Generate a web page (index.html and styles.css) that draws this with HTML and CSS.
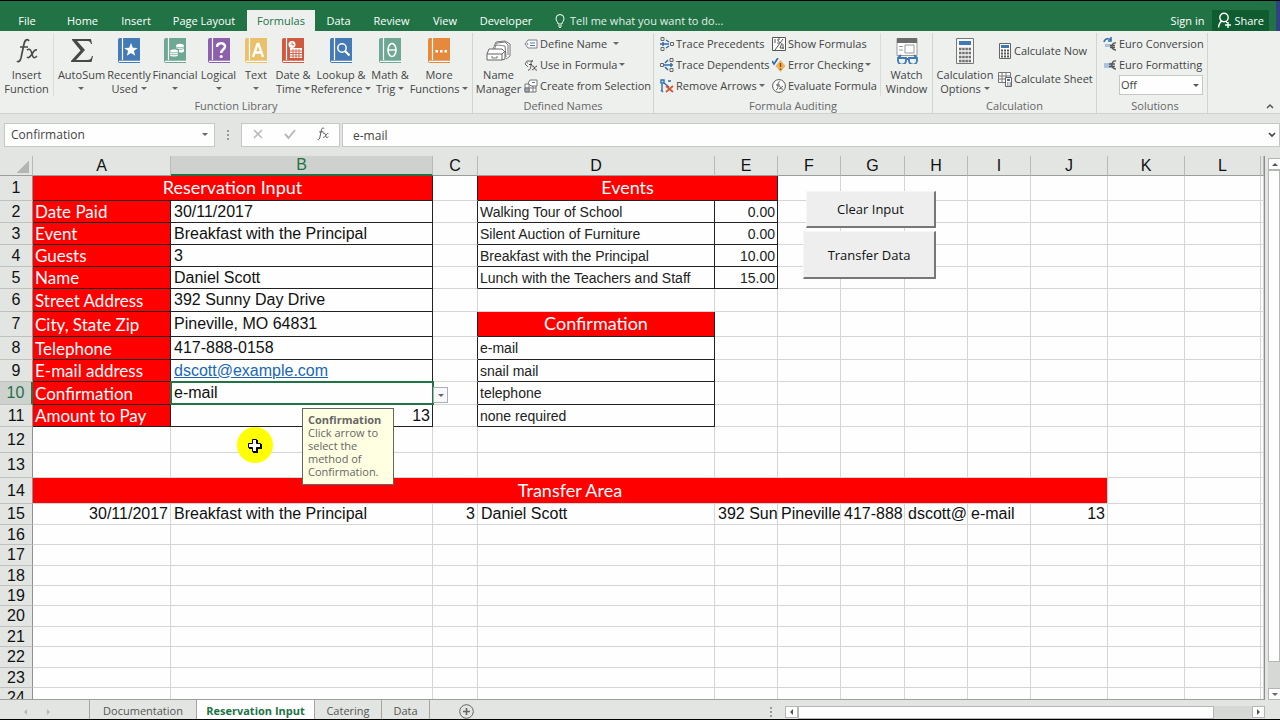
FILE: index.html
```html
<!DOCTYPE html>
<html lang="en">
<head>
<meta charset="utf-8">
<title>Reservation Input</title>
<link rel="stylesheet" href="styles.css">
</head>
<body>
<svg class="defs" aria-hidden="true">
  <symbol id="book" viewBox="0 0 22 26">
    <path d="M2 0h20v25H2a2 2 0 0 1-2-2V2a2 2 0 0 1 2-2z" fill="currentColor"/>
    <path d="M4.5 0v22M1 23.3h21" stroke="#fff" stroke-width="1.2" fill="none"/>
  </symbol>
  <symbol id="fx" viewBox="0 0 22 26">
    <path d="M13 3c-1-2-4-2-5 3L5 20c-1 4-3 4-4 3M4 9h8" stroke="#4a4a4a" stroke-width="1.7" fill="none"/>
    <path d="M11 12c3-2 4 0 5 4s2 5 5 2M21 12c-3-1-4 3-5 4s-3 5-5 3" stroke="#4a4a4a" stroke-width="1.6" fill="none"/>
  </symbol>
</svg>
<div class="app">
  <header class="titlebar">
    <nav class="tabs" aria-label="Ribbon tabs">
      <button>File</button><button>Home</button><button>Insert</button><button>Page Layout</button><button class="on">Formulas</button><button>Data</button><button>Review</button><button>View</button><button>Developer</button>
      <button class="tell"><svg width="10" height="14" viewBox="0 0 10 14" fill="none" stroke="#fff"><path d="M3 10c0-2-2-3-2-5.500a4 4 0 0 1 8 0C9 7 7 8 7 10zM3 12h4M4 13.500h2"/></svg>Tell me what you want to do...</button>
    </nav>
    <div class="account">
      <button>Sign in</button>
      <button class="share"><svg width="15" height="17" viewBox="0 0 15 17" fill="none" stroke="#fff" stroke-width="1.400"><circle cx="7" cy="5.500" r="4.200"/><path d="M5 9c-2 1-3 3-3.500 6.500M9 9l1 2M11 10v6M8 13h6"/></svg>Share</button>
    </div>
  </header>

  <section class="ribbon">
    <div class="group library">
      <div class="bigs">
        <button class="big rule"><svg><use href="#fx"/></svg><span>Insert<br>Function</span></button>
        <button class="big"><svg viewBox="0 0 22 26"><path d="M1 1h19l1 5h-1c-1-3-2-3-4-3H6l8 9-9 10h11c3 0 4-1 5-4h1l-1.500 6H0v-1l9.500-10.500L1 2z" fill="#484848"/></svg><span>AutoSum<br><i class="dd"></i></span></button>
        <button class="big blue"><svg viewBox="0 0 22 26"><use href="#book"/><path d="M13 5l1.800 4.700 4.900.2-3.800 3.100 1.300 4.800-4.200-2.700-4.200 2.700 1.300-4.800-3.800-3.100 4.900-.2z" fill="#fff"/></svg><span>Recently<br>Used <i class="dd"></i></span></button>
        <button class="big green"><svg viewBox="0 0 22 26"><use href="#book"/><g fill="#fff"><path d="M12 8c0-3 8-3 8 0v5c0 2-4 2-5 1V11l-3-1zM6 13c0-2 8-2 8 0v4c0 2-8 2-8 0z"/></g><path d="M12 9c2 1 6 1 8 0M14 11.500c2 0 4 0 6-1M6 14c2 1 6 1 8 0M6 16c2 1 6 1 8 0" stroke="#6fa795" fill="none" stroke-width=".8"/></svg><span>Financial<br><i class="dd"></i></span></button>
        <button class="big purple"><svg viewBox="0 0 22 26"><use href="#book"/><path d="M9 9c0-5 8-5 8-.500 0 3-3.800 3-3.800 6.500" stroke="#fff" stroke-width="2.500" fill="none"/><circle cx="13.200" cy="18.500" r="1.600" fill="#fff"/></svg><span>Logical<br><i class="dd"></i></span></button>
        <button class="big yellow"><svg viewBox="0 0 22 26"><use href="#book"/><path d="M8 19l4.500-13h1L18 19M9.500 14.500h7" stroke="#fff" stroke-width="2.300" fill="none"/></svg><span>Text<br><i class="dd"></i></span></button>
        <button class="big red"><svg viewBox="0 0 22 26"><use href="#book"/><path d="M8 10h12v10H8z" fill="#fff"/><path d="M8 13h12M8 15.500h12M8 18h12M11 11v9M14 11v9M17 11v9" stroke="#d05a40" stroke-width=".9"/><circle cx="10" cy="6.500" r="3.500" fill="#fff"/><path d="M10 4.500v2.300h2" stroke="#d05a40" fill="none"/></svg><span>Date &amp;<br>Time <i class="dd"></i></span></button>
        <button class="big blue"><svg viewBox="0 0 22 26"><use href="#book"/><circle cx="12" cy="10" r="4.200" stroke="#fff" stroke-width="1.500" fill="none"/><path d="M15 13l4.500 4.500" stroke="#fff" stroke-width="2.200"/></svg><span>Lookup &amp;<br>Reference <i class="dd"></i></span></button>
        <button class="big green"><svg viewBox="0 0 22 26"><use href="#book"/><ellipse cx="13" cy="12" rx="4" ry="6.500" stroke="#fff" stroke-width="1.600" fill="none"/><path d="M9 12h8" stroke="#fff" stroke-width="1.400"/></svg><span>Math &amp;<br>Trig <i class="dd"></i></span></button>
        <button class="big orange"><svg viewBox="0 0 22 26"><use href="#book"/><path d="M7.500 12h2.500v2.500H7.500zM12 12h2.500v2.500H12zM16.500 12H19v2.500h-2.500z" fill="#fff"/></svg><span>More<br>Functions <i class="dd"></i></span></button>
      </div>
      <h2>Function Library</h2>
    </div>

    <div class="group names">
      <div class="body">
        <button class="big"><svg class="wide" viewBox="0 0 26 26" fill="#fff" stroke="#777"><path d="M7 11l3-7 9-1 5 3v12l-4 3M9 8l2-3 8-1 3 3v10M9 11c0-5 3-4 10-3l1 11"/><path d="M3 11h13l3 3v7l-3 1H1v-6zM1 16h15l3-3M16 16v6" stroke="#666"/><path d="M6 18v2h5v-2" fill="none"/></svg><span>Name<br>Manager</span></button>
        <div class="list">
          <button><svg viewBox="0 0 14 14" fill="none" stroke="#7a7f87"><path d="M4 3h9v8H4L1 7z" fill="#fff"/><path d="M6 6h5M6 8.500h5" stroke="#4d7fb5"/><circle cx="3.500" cy="7" r=".6"/></svg>Define Name <i class="dd far"></i></button>
          <button><svg viewBox="0 0 14 14" fill="none" stroke="#666"><path d="M9 3H3L1 6l3 3M3 5h1"/><path d="M9 3c-2-1-2 2-2 4s-1 6-3 5M5 6.500h3M8 8c3-1 2 5 5 4M13 8c-2 0-3 4-5 4" stroke="#444"/></svg>Use in Formula <i class="dd"></i></button>
          <button><svg viewBox="0 0 14 14" fill="#fff" stroke="#777"><path d="M1 5h11v8H1zM1 9h11M5 5v8M9 5v8"/><path d="M1 9h4v4H1z" fill="#9ab"/><path d="M6 1h7v6H7L4 4z"/><path d="M8 3.500h3" stroke="#4d7fb5"/></svg>Create from Selection</button>
        </div>
      </div>
      <h2>Defined Names</h2>
    </div>

    <div class="group audit">
      <div class="body">
        <div class="list">
          <button><svg viewBox="0 0 14 14" fill="none" stroke="#666"><path d="M1 .5h3v3H1zM1 10.500h3v3H1zM10.500 5.500h3v3h-3z"/><path d="M0 7h6M3 5v4M6 3l3 2M6 11l3-2M6 7h3" stroke="#2f6ca8" stroke-width="1.500"/></svg>Trace Precedents</button>
          <button><svg viewBox="0 0 14 14" fill="none" stroke="#666"><path d="M.5 5.500h3v3h-3zM10 .5h3v3h-3zM10 10.500h3v3h-3z"/><path d="M4 7h9M11 5v4M5 5l3-3M5 9l3 3" stroke="#2f6ca8" stroke-width="1.500"/></svg>Trace Dependents</button>
          <button><svg viewBox="0 0 14 14" fill="none" stroke="#2f6ca8" stroke-width="1.400"><path d="M1 1h3v3H1zM8 2h3M2 5v7M4 4l5 4M1 11l2 2"/><path d="M6 7l7 6M13 7l-7 6" stroke="#d4553a" stroke-width="1.700"/></svg>Remove Arrows <i class="dd"></i></button>
        </div>
        <div class="list">
          <button><svg viewBox="0 0 14 14" fill="none" stroke="#555"><path d="M.5.500h13v13H.5z" fill="#fff"/><path d="M3 2v4M5 6c3 1 3-2 1-2V2h2M11 2l-8 11M10 6l-2 5h4M11 7v5"/></svg>Show Formulas</button>
          <button><svg viewBox="0 0 14 14" fill="none"><path d="M8.500 2l5 6-5 6-5-6z" fill="#edb45d"/><path d="M8.500 5v4M8.500 10.500v1.500" stroke="#8a4a12" stroke-width="1.500"/><path d="M0 3l2 3 4-6" stroke="#2f6ca8" stroke-width="1.700"/></svg>Error Checking <i class="dd"></i></button>
          <button><svg viewBox="0 0 14 14" fill="none" stroke="#555"><circle cx="7" cy="7" r="6.400" fill="#fff"/><path d="M8 3c-2-1-2 2-2 4s-1 4-2 4M4 6h4M7 7c2 0 1 4 4 3M11 7c-1 0-2 3-4 3"/></svg>Evaluate Formula</button>
        </div>
        <button class="big watch"><svg class="wide" viewBox="0 0 26 26" fill="none"><path d="M3 .5h20v17H3z" fill="#fff" stroke="#999"/><path d="M3 0h20v5H3z" fill="#6b6b6b"/><path d="M11 7h9v8h-9zM5 8.500h4M5 12h4" stroke="#999"/><path d="M4 20h8v2a4 4 0 0 1-8 1zM15 20h8v3a4 4 0 0 1-8-1zM12 21h3M4 20l3-3M23 20l-3-3" stroke="#3f79b5" stroke-width="1.800"/></svg><span>Watch<br>Window</span></button>
      </div>
      <h2>Formula Auditing</h2>
    </div>

    <div class="group calc">
      <div class="body">
        <button class="big"><svg viewBox="0 0 22 26"><path d="M2.500.500h17v25h-17z" fill="#f7f7f7" stroke="#777"/><path d="M5 3h12v4H5z" fill="#3f79b5"/><path d="M5 11h12M5 15h12M5 19h12M5 23h12" stroke="#707070" stroke-width="2.500" stroke-dasharray="2.500 .7"/></svg><span>Calculation<br>Options <i class="dd"></i></span></button>
        <div class="list two">
          <button><svg viewBox="0 0 14 16"><path d="M1.500.500h11v15h-11z" fill="#fff" stroke="#666"/><path d="M3 2h8v3H3z" fill="#3f79b5"/><path d="M3 7.500h8M3 10.500h8M3 13.500h8" stroke="#555" stroke-width="1.800" stroke-dasharray="2 1"/></svg>Calculate Now</button>
          <button><svg viewBox="0 0 14 16"><path d="M.5 1.500h12v10H.5zM.5 5h12M.5 8h12M4 1.500v10M8 1.500v10" fill="#fff" stroke="#777"/><path d="M7.500 6.500h6v9h-6z" fill="#fff" stroke="#666"/><path d="M9 9h3" stroke="#3f79b5" stroke-width="2"/><path d="M9 12h4M9 14h4" stroke="#555" stroke-dasharray="1 .5"/></svg>Calculate Sheet</button>
        </div>
      </div>
      <h2>Calculation</h2>
    </div>

    <div class="group euro">
      <div class="list">
        <button><svg viewBox="0 0 14 14" fill="none"><path d="M1 5c1-4 5-4 7-2M8 0v4H5" stroke="#2f6ca8" stroke-width="1.500"/><path d="M2 7h6v3H2z" fill="#a9c4de"/><path d="M13 6c-5-1-6 7 0 7M7 8.500h5M7 10.500h5" stroke="#555" stroke-width="1.400"/></svg>Euro Conversion</button>
        <button><svg viewBox="0 0 14 14" fill="none"><path d="M1 5h8v5H1z" fill="#a9c4de"/><path d="M13 3c-5-1-6 8 0 8M6 6h6M6 8.500h6" stroke="#555" stroke-width="1.400"/></svg>Euro Formatting</button>
        <select aria-label="Euro formatting"><option>Off</option></select>
      </div>
      <h2>Solutions</h2>
    </div>
    <button class="collapse" aria-label="Collapse ribbon"><svg width="8" height="6" viewBox="0 0 8 6"><path d="M1 5l3-3 3 3" stroke="#555" stroke-width="1.500" fill="none"/></svg></button>
  </section>

  <section class="formulabar">
    <div class="namebox"><input aria-label="Name box" value="Confirmation"><button aria-label="Names"><i class="dd"></i></button></div>
    <span class="grip"></span>
    <div class="tools">
      <button aria-label="Cancel"><svg width="12" height="12" viewBox="0 0 12 12"><path d="M2 2l8 8M10 2l-8 8" stroke="#b8b8b8" stroke-width="1.600"/></svg></button>
      <button aria-label="Enter"><svg width="12" height="12" viewBox="0 0 12 12"><path d="M1 6l3.500 4L11 2" stroke="#b8b8b8" stroke-width="1.900" fill="none"/></svg></button>
      <button aria-label="Insert function"><svg width="12" height="14"><use href="#fx"/></svg></button>
    </div>
    <input class="formula" aria-label="Formula" value="e-mail">
    <button class="expand" aria-label="Expand formula bar"><svg width="8" height="6" viewBox="0 0 8 6"><path d="M1 1l3 3 3-3" stroke="#444" stroke-width="1.600" fill="none"/></svg></button>
  </section>

  <main class="work">
    <div class="sheet">
      <table>
        <colgroup><col class="w-head"><col class="w-a"><col class="w-b"><col class="w-c"><col class="w-d"><col class="w-s"><col class="w-s"><col class="w-g"><col class="w-s"><col class="w-s"><col class="w-m"><col class="w-m"><col class="w-l"><col></colgroup>
        <thead><tr><th class="corner"></th><th>A</th><th class="cur">B</th><th>C</th><th>D</th><th>E</th><th>F</th><th>G</th><th>H</th><th>I</th><th>J</th><th>K</th><th>L</th><th></th></tr></thead>
        <tbody id="grid"></tbody>
      </table>
      <button class="macro clear">Clear Input</button>
      <button class="macro transfer">Transfer Data</button>
      <svg class="pointer" viewBox="0 0 36 36"><circle cx="18" cy="18" r="18" fill="#ff0"/><path d="M16 13h5v4h4v5h-4v4h-5v-4h-4v-5h4z" fill="#000"/><path d="M15.500 12.500h4v4h4v4h-4v4h-4v-4h-4v-4h4z" fill="#fff" stroke="#000"/></svg>
    </div>
    <div class="vscroll"><span class="sbtn"><i class="up"></i></span><span class="thumb"></span><span class="track"></span><span class="sbtn"><i class="dd"></i></span></div>
  </main>

  <footer class="bottom">
    <div class="arrows"><i class="left"></i><i class="right"></i></div>
    <button class="stab first">Documentation</button><button class="stab on">Reservation Input</button><button class="stab cat">Catering</button><button class="stab data">Data</button>
    <button class="add" aria-label="New sheet"><svg width="15" height="15" viewBox="0 0 15 15" fill="none" stroke="#666"><circle cx="7.500" cy="7.500" r="6.800"/><path d="M7.500 4v7M4 7.500h7" stroke-width="1.600"/></svg></button>
    <span class="grip"></span>
    <div class="hscroll"><span class="sbtn"><i class="left"></i></span><span class="thumb"></span><span class="track"></span><span class="sbtn"><i class="right"></i></span></div>
  </footer>
</div>
<script src="sheet.js"></script>
</body>
</html>
```
FILE: sheet.js
```
const heights = [25,22,22,22,22,23,25,23,22,23,22,26,25,26,21,20,21,20,20,21,20,21,20,20];
const tip = '<span class="selection"></span><button class="drop" aria-label="Choose confirmation"><i class="dd"></i></button>' +
  '<div class="tip" role="tooltip"><b>Confirmation</b><br>Click arrow to<br>select the<br>method of<br>Confirmation.</div>';
const form = [
  ['Date Paid', '30/11/2017'], ['Event', 'Breakfast with the Principal'], ['Guests', '3'],
  ['Name', 'Daniel Scott'], ['Street Address', '392 Sunny Day Drive'], ['City, State Zip', 'Pineville, MO 64831'],
  ['Telephone', '417-888-0158'], ['E-mail address', '<a href="mailto:dscott@example.com">dscott@example.com</a>'],
  ['Confirmation', 'e-mail' + tip], ['Amount to Pay', '13']
];
const events = [['Walking Tour of School', '0.00'], ['Silent Auction of Furniture', '0.00'],
  ['Breakfast with the Principal', '10.00'], ['Lunch with the Teachers and Staff', '15.00']];
const methods = ['e-mail', 'snail mail', 'telephone', 'none required'];
const record = ['30/11/2017', 'Breakfast with the Principal', '3', 'Daniel Scott', '392 Sun', 'Pineville', '417-888', 'dscott@', 'e-mail', '13'];

const cell = (text = '', cls = '', span = 1) => `<td class="${cls}" colspan="${span}">${text}</td>`;
const blanks = (n) => cell().repeat(n);

function cells(r) {
  if (r === 1) return cell('Reservation Input', 'title box', 2) + cell('', 'edge') + cell('Events', 'title box', 2) + blanks(8);
  if (r === 14) return cell('Transfer Area', 'title', 10) + blanks(3);
  if (r === 15) return record.map((t, i) => cell(t, [0, 2, 9].includes(i) ? 'num' : '')).join('') + blanks(3);
  if (r < 2 || r > 11) return blanks(13);
  const [label, value] = form[r - 2];
  let html = cell(label, 'label box') + cell(value, 'box' + (r === 10 ? ' active' : r === 11 ? ' num' : ''));
  if (r <= 5) html += cell('', 'edge') + cell(events[r - 2][0], 'box small') + cell(events[r - 2][1], 'box small num');
  else if (r === 6) html += blanks(3);
  else if (r === 7) html += cell('', 'edge') + cell('Confirmation', 'title box') + blanks(1);
  else html += cell('', 'edge') + cell(methods[r - 8], 'box small') + blanks(1);
  return html + blanks(8);
}

document.getElementById('grid').innerHTML = heights.map((h, i) =>
  `<tr style="height:${h}px"><th${i === 9 ? ' class="cur"' : ''}>${i + 1}</th>${cells(i + 1)}</tr>`).join('');
```
FILE: styles.css
```css
* { box-sizing: border-box; }
body { margin: 0; font: 11px/14px "Open Sans", "Noto Sans", sans-serif; color: #444; background: #e3e5e3; }
button, input, select { font: inherit; color: inherit; border: 0; background: none; padding: 0; margin: 0; white-space: nowrap; }
.defs { position: absolute; width: 0; height: 0; }
.app { display: flex; flex-direction: column; height: 100vh; border-top: 1px solid #000; border-bottom: 1px solid #000; overflow: hidden; }
.dd, .up, .left, .right { display: inline-block; border: 3px solid transparent; }
.dd { border-top-color: #666; border-bottom-width: 0; vertical-align: 3px; }
.up { border-bottom-color: #555; border-top-width: 0; }
.left { border-right-color: #555; border-left-width: 0; }
.right { border-left-color: #555; border-right-width: 0; }
.dd.far { margin-left: 4px; }

.titlebar { display: flex; justify-content: space-between; height: 30px; padding-top: 9px; background: #217346; color: #fff; border-right: 4px solid #30427f; }
.tabs { display: grid; grid-template-columns: 54px 57px 50px 86px 68px 47px 59px 48px 74px auto; }
.tabs .on { background: #eef0ee; color: #217346; }
.tell { display: flex; align-items: center; gap: 5px; padding-left: 12px; color: #e3eee7; }
.account { display: flex; gap: 8px; padding-right: 7px; }
.share { display: flex; align-items: center; gap: 2px; padding: 0 5px; background: #0e5c2f; }

.ribbon { display: flex; height: 83px; padding-top: 2px; background: #eef0ee; border-bottom: 1px solid #cfd1cf; position: relative; }
.group { display: flex; flex-direction: column; justify-content: space-between; height: 80px; border-right: 1px solid #d2d4d2; }
.group h2 { margin: 0; font-size: 11px; line-height: 14px; font-weight: 400; text-align: center; color: #666; }
.library { width: 473px; }
.names { width: 181px; }
.audit { width: 279px; }
.calc { width: 164px; }
.euro { width: 111px; padding-left: 6px; }
.bigs { display: grid; grid-template-columns: 54px 55px 40px 52px 35px 40px 34px 62px 36px 62px; }
.big { display: flex; flex-direction: column; align-items: center; gap: 4px; padding-top: 5px; height: 63px; }
.big svg { width: 22px; height: 26px; flex: none; }
.big svg.wide { width: 26px; }
.rule { border-right: 1px solid #dadcda; }
.blue { --c: #447ab5; } .green { --c: #6fa795; } .purple { --c: #8d60ad; }
.yellow { --c: #eac06a; } .red { --c: #d05a40; } .orange { --c: #e58a3c; }
.big use { color: var(--c); }
.body { display: flex; }
.names .big { width: 51px; }
.list { display: flex; flex-direction: column; }
.list button { display: flex; align-items: center; gap: 2px; height: 21px; }
.list svg { width: 14px; height: 14px; flex: none; }
.audit .list { width: 112px; padding-left: 6px; }
.audit .list + .list { width: 114px; padding-left: 6px; }
.watch { flex: 1; border-left: 1px solid #dadcda; }
.calc .big { width: 64px; }
.list.two { gap: 7px; padding: 7px 0 0 1px; }
.list.two svg { height: 16px; }
.list select { width: 84px; height: 20px; margin-left: 16px; padding: 0 0 0 1px; border: 1px solid #c6c8c6; background: #fdfefd; appearance: none; }
.list:has(select) { position: relative; }
.list:has(select)::after { content: ""; position: absolute; right: 8px; bottom: 8px; border: 3px solid transparent; border-top-color: #555; border-bottom: 0; }
.collapse { position: absolute; right: 6px; bottom: 4px; line-height: 0; }

.formulabar { display: flex; align-items: center; height: 42px; padding: 0 0 0 4px; font-size: 12px; position: relative; }
.formulabar > div, .formula { height: 24px; border: 1px solid #c6c8c6; background: #fdfefd; }
.namebox { display: flex; width: 211px; }
.namebox input { flex: 1; min-width: 0; padding-left: 6px; }
.namebox button { width: 18px; }
.grip { width: 2px; height: 11px; background: repeating-linear-gradient(#999 0 2px, transparent 2px 4px); }
.formulabar .grip { margin: 0 12px; }
.tools { display: grid; grid-template-columns: 1fr 1fr 1fr; width: 99px; align-items: center; }
.formula { flex: 1; margin-left: 2px; padding-left: 10px; }
.expand { position: absolute; right: 4px; top: 18px; line-height: 0; }

.work { display: flex; flex: 1; min-height: 0; }
.sheet { position: relative; flex: 1; min-width: 0; overflow: hidden; background: #fdfefd; border-right: 1px solid #8c8e8c; border-bottom: 1px solid #9c9e9c; font: 16px/18px "Liberation Sans", Arial, sans-serif; color: #111; }
table { width: 100%; table-layout: fixed; border-collapse: separate; border-spacing: 0; }
.w-head { width: 33px; } .w-a { width: 138px; } .w-b { width: 262px; } .w-c { width: 45px; } .w-d { width: 237px; }
.w-s { width: 63px; } .w-g { width: 64px; } .w-m { width: 77px; } .w-l { width: 76px; }
th { padding: 0; font-weight: 400; background: #e3e5e3; border-right: 1px solid #8f918f; border-bottom: 1px solid #bfc1bf; }
thead tr { height: 20px; }
thead th { border-right-color: #b9bbb9; border-bottom-color: #9c9e9c; }
.corner { background: linear-gradient(135deg, transparent 50%, #b4b6b4 50%) 16px 4px / 13px 13px no-repeat #e3e5e3; }
th.cur { background: #cfd1cf; color: #217346; }
thead th.cur { border-bottom: 2px solid #217346; }
tbody th.cur { border-right: 2px solid #217346; }
td { padding: 0 0 0 3px; border-right: 1px solid #d4d6d4; border-bottom: 1px solid #d4d6d4; white-space: nowrap; overflow: hidden; }
.box { border-color: #222; }
.edge { border-right-color: #222; }
.num { text-align: right; padding-right: 2px; }
.small { font-size: 14px; color: #222; padding-left: 2px; }
.label, .title { background: #f00; color: #fff; font-family: Lato, sans-serif; }
.label { font-size: 17px; line-height: 21px; padding: 0 0 0 2px; }
.title { text-align: center; font-size: 18px; line-height: 22px; padding: 0 0 2px; }
td a { color: #1967b5; }
.active { position: relative; overflow: visible; }
.selection { position: absolute; inset: -1px -2px -1px -1px; border: 2px solid #217346; }
.drop { position: absolute; left: 100%; top: 5px; margin-left: 1px; width: 15px; height: 16px; border: 1px solid #abb0b8; background: #f7f8fa; line-height: 0; }
.tip { position: absolute; z-index: 2; left: 131px; top: 26px; width: 92px; padding: 4px 5px 6px; border: 1px solid #666; background: #ffffe1; color: #666; font: 11px/13px "Open Sans", sans-serif; }
.macro { position: absolute; border: 1px solid; border-color: #f6f6f6 #777 #777 #f6f6f6; border-width: 1px 2px 2px 1px; background: #edeeed; font: 13px/18px "Open Sans", sans-serif; }
.clear { left: 806px; top: 35px; width: 130px; height: 37px; }
.transfer { left: 803px; top: 75px; width: 133px; height: 48px; }
.pointer { position: absolute; left: 237px; top: 271px; width: 36px; height: 36px; }

.vscroll { display: flex; flex-direction: column; width: 15px; padding: 2px 0 0 3px; }
.sbtn { display: flex; flex: none; align-items: center; justify-content: center; width: 13px; height: 12px; border: 1px solid #b4b6b4; background: #fdfefd; }
.thumb { background: #fdfefd; border: 1px solid #b4b6b4; }
.track { background: #d6d8d6; }
.vscroll .thumb { flex: 19; }
.vscroll .track { flex: 1; }

.bottom { display: flex; height: 19px; align-items: stretch; }
.arrows { display: flex; gap: 20px; align-items: center; width: 89px; padding: 4px 0 0 24px; opacity: .3; }
.stab { padding-top: 3px; border-right: 1px solid #a4a6a4; color: #555; }
.first { width: 108px; border-left: 1px solid #a4a6a4; }
.stab.on { width: 118px; background: #fdfefd; color: #217346; font-weight: 700; }
.cat { width: 67px; }
.data { width: 48px; }
.add { margin: 4px auto 0 29px; line-height: 0; }
.bottom .grip { margin: 7px 13px 0 0; }
.hscroll { display: flex; width: 480px; padding-top: 6px; margin-right: 15px; }
.hscroll .thumb { flex: 11; }
.hscroll .track { flex: 1; }
```
